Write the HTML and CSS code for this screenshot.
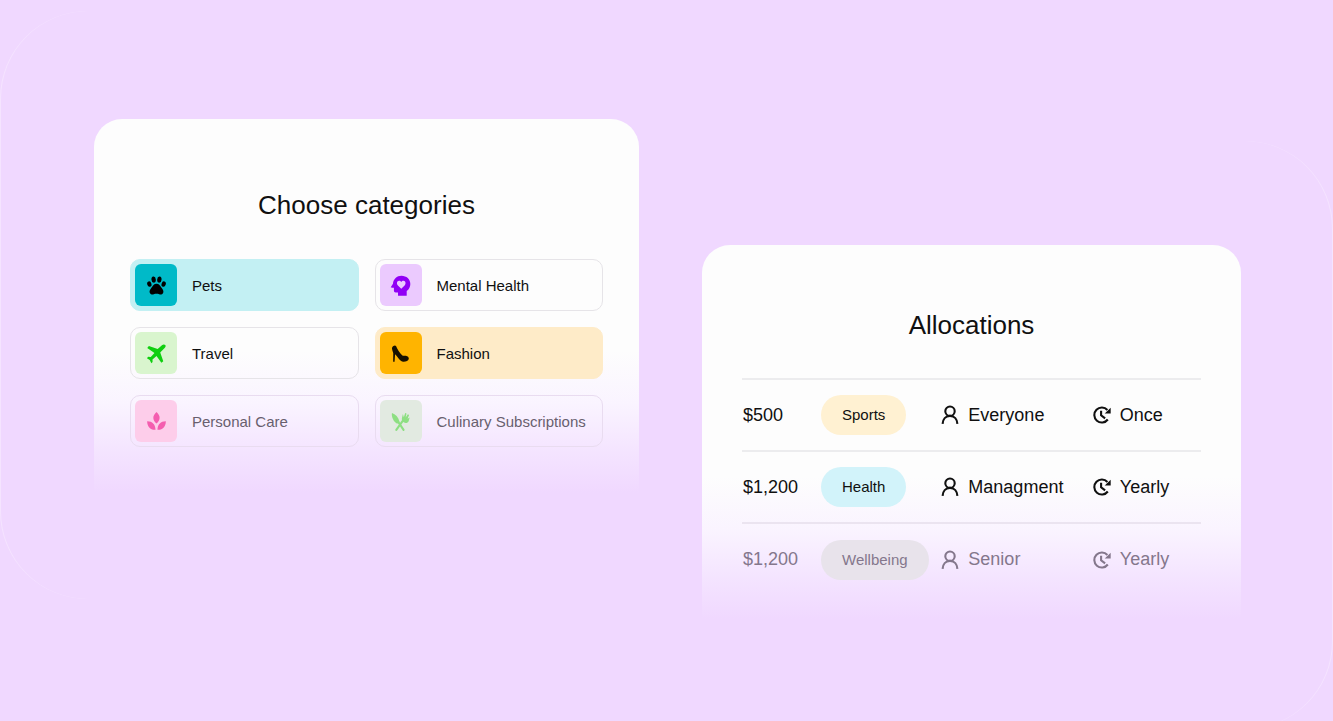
FILE: index.html
```
<!DOCTYPE html>
<html lang="en">
<head>
<meta charset="utf-8">
<meta name="viewport" content="width=device-width, initial-scale=1">
<title>Categories and allocations</title>
<link rel="stylesheet" href="styles.css">
</head>
<body>
<svg class="symbols" aria-hidden="true">
  <symbol id="person" viewBox="0 0 20 20"><g fill="none" stroke="currentColor" stroke-width="2.100"><circle cx="10" cy="6.200" r="4.700"/><path d="M2.600 18.900c.2-4.700 3-8 7.400-8s7.200 3.300 7.400 8"/></g></symbol>
  <symbol id="clock" viewBox="0 0 20 20"><g fill="none" stroke="currentColor" stroke-width="2.100"><path d="M15.800 14.500A7.500 7.500 0 1 1 15.400 5"/><path d="M9.100 5.800v4.500l4 3.100"/></g><path fill="currentColor" d="M18.700 2.800v5.700h-6z"/></symbol>
</svg>
<main class="stage">
  <section class="card card-categories" aria-labelledby="categories-title">
    <h1 class="title" id="categories-title">Choose categories</h1>
    <div class="options">
      <button class="option option-pets" type="button" aria-pressed="true">
        <span class="tile tile-pets"><svg class="glyph" viewBox="0 0 22 22" fill="currentColor" aria-hidden="true"><ellipse cx="3.500" cy="9.500" rx="2.200" ry="2.900" transform="rotate(-18 3.500 9.500)"/><ellipse cx="8" cy="4.800" rx="2.300" ry="3.200" transform="rotate(-5 8 4.800)"/><ellipse cx="14" cy="4.800" rx="2.300" ry="3.200" transform="rotate(5 14 4.800)"/><ellipse cx="18.500" cy="9.500" rx="2.200" ry="2.900" transform="rotate(18 18.500 9.500)"/><path d="M11 9.200c2.600 0 3.900 2.300 5.500 4.300 1.700 2 2.200 3.700 1.400 5.300-.9 1.700-2.600 1.900-4 1.400-1.800-.6-4-.6-5.800 0-1.400.5-3.100.3-4-1.400-.8-1.600-.3-3.300 1.400-5.300 1.600-2 2.900-4.300 5.500-4.300z"/></svg></span>
        Pets
      </button>
      <button class="option" type="button" aria-pressed="false">
        <span class="tile tile-mental"><svg class="glyph" viewBox="0 0 22 22" aria-hidden="true"><path fill="currentColor" d="M12 .7c5.300 0 9.300 3.700 9.300 8.700 0 3.100-1.400 5.700-3.800 7.300v5H8.400v-3.400H6c-1.300 0-1.900-.8-1.900-2v-3H1.600c-.6 0-.8-.5-.5-1l2-3.200C3.500 4.200 7.200.7 12 .7z"/><path fill="#ebcafe" d="M11.800 14.300 8.300 11C6.500 9.200 7.200 6 9.500 6c1 0 1.800.5 2.300 1.300C12.300 6.500 13.100 6 14.100 6c2.300 0 3 3.200 1.200 5z"/></svg></span>
        Mental Health
      </button>
      <button class="option" type="button" aria-pressed="false">
        <span class="tile tile-travel"><svg class="glyph" viewBox="0 0 22 22" fill="currentColor" aria-hidden="true"><path d="M20.200 2c.8.8.3 2.200-.7 3.200l-4.600 4.700 3.200 9.200-2 1.700-5.100-7.100-4.200 3.500.1 2.800-1.300 1.200-1.700-3.500L1 15.900l1.200-1.400 2.800.2 3.900-4.300L1.300 5.200l1.700-2 9.200 3.100 4.500-4c1-1 2.700-1.100 3.500-.3z"/></svg></span>
        Travel
      </button>
      <button class="option option-fashion" type="button" aria-pressed="true">
        <span class="tile tile-fashion"><svg class="glyph" viewBox="0 0 22 22" fill="currentColor" aria-hidden="true"><path d="M3.600 3.200c.9-.8 2-.9 2.700 0 1.500 3.700 3.700 7.300 6.400 9.700 1.200 1 2.400.3 3.900.5 2 .3 3.200 1.600 3.100 3-.2 2-2.800 3.200-5.600 3.200-4.200 0-5.100-4.600-8.800-7.700L4.800 19.700H3.300l.1-9.200C2.700 8.700 2.300 7.400 2.100 6.100c-.2-1.200.5-2.200 1.500-2.900z"/></svg></span>
        Fashion
      </button>
      <button class="option option-faded" type="button" aria-pressed="false">
        <span class="tile tile-care"><svg class="glyph" viewBox="0 0 22 22" fill="currentColor" aria-hidden="true"><path d="M11 1c4.400 4 4.400 8.200 0 12.200-4.400-4-4.400-8.200 0-12.200zM1.200 10.800c5.300-.1 8.500 2.900 8.800 8.900-5.300.4-8.700-2.900-8.800-8.900zM20.800 10.800c-5.300-.1-8.500 2.900-8.800 8.900 5.300.4 8.700-2.900 8.800-8.900z"/></svg></span>
        Personal Care
      </button>
      <button class="option option-faded" type="button" aria-pressed="false">
        <span class="tile tile-culinary"><svg class="glyph" viewBox="0 0 22 22" aria-hidden="true"><path fill="currentColor" d="M2 2.200c3.800 1.300 6.700 4.300 8 9.200l-2.600 2C3.600 11 1.400 6.500 2 2.200z"/><path d="m8.800 11.700 5.400 8M13.900 9.600 6.600 19.700" fill="none" stroke="currentColor" stroke-width="2.200" stroke-linecap="round"/><path fill="currentColor" d="m13.500 3.200 1 3.400L15.900 2l1.400.6-.9 4.200 2.300-3.400 1.300.9-1.600 3.700 2.200-1.100-1 3.500c-.8 2.100-3.200 2.900-5.200 1.500-2-1.300-2.400-3.400-1.700-5.400z"/></svg></span>
        Culinary Subscriptions
      </button>
    </div>
  </section>

  <section class="card card-allocations" aria-labelledby="allocations-title">
    <h2 class="title" id="allocations-title">Allocations</h2>
    <table class="allocations" aria-labelledby="allocations-title">
      <colgroup><col class="col-amount"><col class="col-tag"><col class="col-group"><col class="col-period"></colgroup>
      <tbody>
        <tr>
          <td>$500</td>
          <td><span class="tag tag-sports">Sports</span></td>
          <td><span class="detail"><svg class="symbol" aria-hidden="true"><use href="#person"/></svg>Everyone</span></td>
          <td><span class="detail"><svg class="symbol" aria-hidden="true"><use href="#clock"/></svg>Once</span></td>
        </tr>
        <tr>
          <td>$1,200</td>
          <td><span class="tag tag-health">Health</span></td>
          <td><span class="detail"><svg class="symbol" aria-hidden="true"><use href="#person"/></svg>Managment</span></td>
          <td><span class="detail"><svg class="symbol" aria-hidden="true"><use href="#clock"/></svg>Yearly</span></td>
        </tr>
        <tr class="row-faded">
          <td>$1,200</td>
          <td><span class="tag tag-wellbeing">Wellbeing</span></td>
          <td><span class="detail"><svg class="symbol" aria-hidden="true"><use href="#person"/></svg>Senior</span></td>
          <td><span class="detail"><svg class="symbol" aria-hidden="true"><use href="#clock"/></svg>Yearly</span></td>
        </tr>
      </tbody>
    </table>
  </section>
</main>
</body>
</html>
```

FILE: styles.css
```
* {
  box-sizing: border-box;
}

body {
  margin: 0;
  background: #f0d8ff;
  color: #101010;
  font-family: "Liberation Sans", Arial, sans-serif;
}

.symbols {
  display: none;
}

.stage {
  position: relative;
  display: grid;
  grid-template-columns: 545fr 539fr;
  column-gap: 63px;
  align-items: start;
  min-height: 100vh;
  padding: 119px 92px 80px 94px;
  overflow: hidden;
}

/* Faint rounded outlines behind the two cards */
.stage::before,
.stage::after {
  content: "";
  position: absolute;
  width: 50%;
  height: 588px;
  border: 0 solid #f5e4ff;
  pointer-events: none;
}

.stage::before {
  top: 11px;
  left: 0;
  border-left-width: 1px;
  border-radius: 88px 0 0 88px;
}

.stage::after {
  top: 141px;
  right: 0;
  border-right-width: 1px;
  border-radius: 0 88px 88px 0;
}

.card {
  border-radius: 28px 28px 0 0;
  background: linear-gradient(#fdfdfd 62%, #faf4ff 76%, #f4e4ff 89%, #f0d8ff);
}

.card-categories {
  padding: 70px 36px 46px;
}

.card-allocations {
  margin-top: 126px;
  padding: 64px 40px 24px;
}

.title {
  margin: 0;
  font-size: 26px;
  font-weight: 400;
  line-height: 32px;
  text-align: center;
}

.options {
  display: grid;
  grid-template-columns: 1fr 1fr;
  gap: 16px;
  margin-top: 38px;
}

.option {
  display: flex;
  align-items: center;
  gap: 15px;
  height: 52px;
  padding: 0 4px;
  border: 1px solid #e6e4e8;
  border-radius: 10px;
  background: transparent;
  color: inherit;
  font: inherit;
  font-size: 15px;
  white-space: nowrap;
  cursor: pointer;
}

.option-pets {
  border-color: #c3f0f3;
  background: #c3f0f3;
}

.option-fashion {
  border-color: #feebc8;
  background: #feebc8;
}

.option-faded {
  border-color: #e9dcf0;
  color: #685f6e;
}

.tile {
  display: grid;
  flex: none;
  place-items: center;
  width: 42px;
  height: 42px;
  border-radius: 6px;
}

.tile-pets {
  background: #00bac8;
  color: #000;
}

.tile-mental {
  background: #ebcafe;
  color: #9100f5;
}

.tile-travel {
  background: #d9f5ce;
  color: #0fcf0f;
}

.tile-fashion {
  background: #ffb400;
  color: #161000;
}

.tile-care {
  background: #fdcdea;
  color: #f45daf;
}

.tile-culinary {
  background: #e2eae1;
  color: #8ddf82;
}

.glyph {
  width: 21px;
  height: 21px;
}

.allocations {
  width: 100%;
  margin-top: 37px;
  border-collapse: collapse;
  table-layout: fixed;
  font-size: 18px;
}

.col-amount {
  width: 17%;
}

.col-tag {
  width: 26%;
}

.col-group {
  width: 33%;
}

.allocations tr {
  border-top: 2px solid #ececee;
}

.allocations td {
  height: 72px;
  padding: 0 0 0 1px;
  white-space: nowrap;
}

.tag {
  display: inline-block;
  padding: 0 21px;
  border-radius: 20px;
  font-size: 15px;
  line-height: 40px;
  vertical-align: middle;
}

.tag-sports {
  background: #fff1d2;
}

.tag-health {
  background: #d2f3fa;
}

.tag-wellbeing {
  background: #e8e3eb;
}

.detail {
  display: inline-flex;
  align-items: center;
  gap: 8px;
  vertical-align: middle;
}

.symbol {
  width: 20px;
  height: 20px;
}

.allocations .row-faded {
  border-top-color: #ebe4f0;
  color: #84778c;
}

@media (max-width: 1100px) {
  .stage {
    grid-template-columns: minmax(0, 560px);
    justify-content: center;
    padding: 48px 24px;
    row-gap: 40px;
  }

  .card-allocations {
    margin-top: 0;
  }
}
```
